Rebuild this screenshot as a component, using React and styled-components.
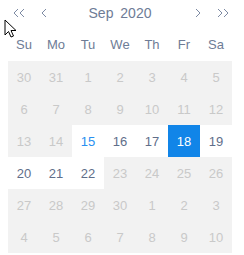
import React from "react";
import styled, { createGlobalStyle } from "styled-components";

const GlobalStyle = createGlobalStyle`
  html, body {
    margin: 0;
    padding: 0;
    background: #ffffff;
  }
  body {
    font-family: "Liberation Sans", Arial, sans-serif;
  }
`;

const Calendar = styled.div`
  position: relative;
  width: 224px;
  padding: 0 8px;
`;

const Header = styled.div`
  display: flex;
  align-items: center;
  height: 25px;
  color: #6e7c96;
`;

const NavGroup = styled.div`
  display: flex;
  align-items: center;
  width: 40px;
  box-sizing: border-box;
  justify-content: ${(p) => (p.right ? "flex-end" : "flex-start")};
  padding: ${(p) => (p.right ? "0 3px 0 0" : "0 0 0 5px")};
`;

const NavButton = styled.span`
  display: flex;
  cursor: pointer;
  margin: ${(p) => (p.space ? (p.right ? "0 16px 0 0" : "0 0 0 16px") : "0")};
`;

const Title = styled.div`
  flex: 1;
  text-align: center;
  font-size: 14px;
  word-spacing: 3px;
`;

const WeekRow = styled.div`
  display: grid;
  grid-template-columns: repeat(7, 32px);
  height: 36px;
  align-items: center;
  color: #6e7c96;
  font-size: 13px;
`;

const WeekDay = styled.div`
  text-align: center;
  padding-top: 3px;
`;

const Grid = styled.div`
  display: grid;
  grid-template-columns: repeat(7, 32px);
  grid-auto-rows: 32px;
`;

const Cell = styled.div`
  display: flex;
  align-items: center;
  justify-content: center;
  font-size: 13px;
  background: ${(p) => (p.selected ? "#1185e8" : p.active ? "#ffffff" : "#f2f2f2")};
  color: ${(p) =>
    p.selected ? "#ffffff" : p.today ? "#2a8ff0" : p.active ? "#5f6e8a" : "#c9c9c9"};
`;

const Pointer = styled.svg`
  position: absolute;
  left: 4px;
  top: 19px;
`;

const Chevron = ({ dir }) => (
  <svg width="6" height="10" viewBox="0 0 6 10">
    <path
      d={dir === "left" ? "M5 1 L1 5 L5 9" : "M1 1 L5 5 L1 9"}
      fill="none"
      stroke="#7d8aa3"
      strokeWidth="1"
    />
  </svg>
);

const weekDays = ["Su", "Mo", "Tu", "We", "Th", "Fr", "Sa"];

const days = [
  30, 31, 1, 2, 3, 4, 5,
  6, 7, 8, 9, 10, 11, 12,
  13, 14, 15, 16, 17, 18, 19,
  20, 21, 22, 23, 24, 25, 26,
  27, 28, 29, 30, 1, 2, 3,
  4, 5, 6, 7, 8, 9, 10,
];

export default function App() {
  return (
    <>
      <GlobalStyle />
      <Calendar>
        <Header>
          <NavGroup>
            <NavButton><Chevron dir="left" /><Chevron dir="left" /></NavButton>
            <NavButton space><Chevron dir="left" /></NavButton>
          </NavGroup>
          <Title>Sep 2020</Title>
          <NavGroup right>
            <NavButton space right><Chevron dir="right" /></NavButton>
            <NavButton><Chevron dir="right" /><Chevron dir="right" /></NavButton>
          </NavGroup>
        </Header>
        <WeekRow>
          {weekDays.map((d) => (
            <WeekDay key={d}>{d}</WeekDay>
          ))}
        </WeekRow>
        <Grid>
          {days.map((d, i) => {
            const active = i >= 16 && i <= 23;
            return (
              <Cell key={i} active={active} today={i === 16} selected={i === 19}>
                {d}
              </Cell>
            );
          })}
        </Grid>
        <Pointer width="13" height="19" viewBox="0 0 13 19">
          <path
            d="M1 1 L1 16 L4.5 12.5 L7 18 L9.5 17 L7 11.5 L12 11.5 Z"
            fill="#ffffff"
            stroke="#000000"
            strokeWidth="1"
            strokeLinejoin="round"
          />
        </Pointer>
      </Calendar>
    </>
  );
}
